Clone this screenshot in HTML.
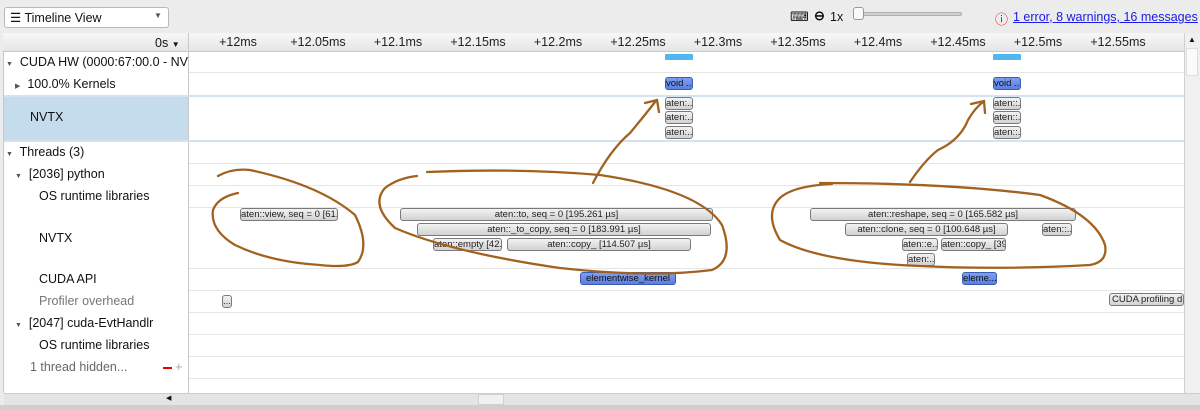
<!DOCTYPE html>
<html><head><meta charset="utf-8"><style>
*{box-sizing:border-box;margin:0;padding:0}
body{width:1200px;height:410px;overflow:hidden;background:#ececec;font-family:"Liberation Sans",sans-serif;font-size:12px;color:#111;position:relative}
.a{position:absolute}
.lbl{position:absolute;white-space:nowrap;font-size:12.5px}
.bar{position:absolute;height:13px;border:1px solid #7a7a7a;border-radius:3px;background:linear-gradient(#f2f2f2,#d2d2d2);font-size:9.5px;line-height:11px;text-align:center;overflow:hidden;white-space:nowrap;color:#222}
.blu{background:linear-gradient(#7d9ef0,#5b7fe0);border-color:#3b5bb0;color:#111}
.hl{position:absolute;left:189px;width:995px;height:1px;background:#e6e6e6}
.tl{position:absolute;top:35px;font-size:12.5px;color:#222;transform:translateX(-50%)}
</style></head><body>
<div class="a" style="left:4px;top:7px;width:165px;height:21px;background:#fff;border:1px solid #b8b8b8;border-radius:3px"></div>
<div class="lbl" style="left:10px;top:10px">☰ Timeline View</div>
<div class="lbl" style="left:154px;top:11px;font-size:8px;color:#555">▼</div>
<div class="lbl" style="left:790px;top:9px;font-size:13px">⌨</div>
<div class="lbl" style="left:814px;top:8px;font-size:13px;font-weight:bold">⊖</div>
<div class="lbl" style="left:830px;top:10px">1x</div>
<div class="a" style="left:855px;top:12px;width:107px;height:4px;background:#d0d0d0;border:1px solid #b0b0b0;border-radius:2px"></div>
<div class="a" style="left:853px;top:7px;width:11px;height:13px;background:#fafafa;border:1px solid #999;border-radius:3px"></div>
<div class="lbl" style="left:995px;top:9px;color:#e00;font-size:13px">ⓘ</div>
<div class="lbl" style="left:1013px;top:10px;color:#1a1ae6;text-decoration:underline">1 error, 8 warnings, 16 messages</div>
<div class="a" style="left:3px;top:33px;width:186px;height:360px;background:#fff;border-left:1px solid #c8c8c8;border-right:1px solid #c8c8c8"></div>
<div class="a" style="left:189px;top:52px;width:995px;height:341px;background:#fff"></div>
<div class="a" style="left:3px;top:33px;width:1181px;height:19px;background:linear-gradient(#f7f7f7,#e6e6e6);border-bottom:1px solid #c8c8c8"></div>
<div class="a" style="left:188px;top:33px;width:1px;height:360px;background:#c8c8c8"></div>
<div class="lbl" style="left:155px;top:36px">0s <span style="font-size:8px">▼</span></div>
<div class="tl" style="left:238px">+12ms</div><div class="tl" style="left:318px">+12.05ms</div><div class="tl" style="left:398px">+12.1ms</div><div class="tl" style="left:478px">+12.15ms</div><div class="tl" style="left:558px">+12.2ms</div><div class="tl" style="left:638px">+12.25ms</div><div class="tl" style="left:718px">+12.3ms</div><div class="tl" style="left:798px">+12.35ms</div><div class="tl" style="left:878px">+12.4ms</div><div class="tl" style="left:958px">+12.45ms</div><div class="tl" style="left:1038px">+12.5ms</div><div class="tl" style="left:1118px">+12.55ms</div>
<div class="a" style="left:4px;top:96px;width:184px;height:44px;background:#c5dcec"></div>
<div class="a" style="left:4px;top:95px;width:1180px;height:2px;background:#d6e3ee"></div>
<div class="a" style="left:4px;top:140px;width:1180px;height:2px;background:#d6e3ee"></div>
<div class="hl" style="top:72px"></div><div class="hl" style="top:163px"></div><div class="hl" style="top:185px"></div><div class="hl" style="top:207px"></div><div class="hl" style="top:268px"></div><div class="hl" style="top:290px"></div><div class="hl" style="top:312px"></div><div class="hl" style="top:334px"></div><div class="hl" style="top:356px"></div><div class="hl" style="top:378px"></div>
<div class="lbl" style="left:6px;top:55px"><span style="font-size:7px;color:#555">▼</span>&nbsp; CUDA HW (0000:67:00.0 - NV</div>
<div class="lbl" style="left:15px;top:77px"><span style="font-size:7px;color:#555">▶</span>&nbsp; 100.0% Kernels</div>
<div class="lbl" style="left:30px;top:110px">NVTX</div>
<div class="lbl" style="left:6px;top:145px"><span style="font-size:7px;color:#555">▼</span>&nbsp; Threads (3)</div>
<div class="lbl" style="left:15px;top:167px"><span style="font-size:7px;color:#555">▼</span>&nbsp; [2036] python</div>
<div class="lbl" style="left:39px;top:189px">OS runtime libraries</div>
<div class="lbl" style="left:39px;top:231px">NVTX</div>
<div class="lbl" style="left:39px;top:272px">CUDA API</div>
<div class="lbl" style="left:39px;top:294px;color:#777">Profiler overhead</div>
<div class="lbl" style="left:15px;top:316px"><span style="font-size:7px;color:#555">▼</span>&nbsp; [2047] cuda-EvtHandlr</div>
<div class="lbl" style="left:39px;top:338px">OS runtime libraries</div>
<div class="lbl" style="left:30px;top:360px;color:#666">1 thread hidden...</div>
<div class="a" style="left:163px;top:367px;width:9px;height:2px;background:#e00"></div>
<div class="lbl" style="left:175px;top:359px;color:#aaa;font-size:13px">+</div>
<div class="a" style="left:665px;top:54px;width:28px;height:6px;background:#4fb6f0;border-radius:1px"></div>
<div class="a" style="left:993px;top:54px;width:28px;height:6px;background:#4fb6f0;border-radius:1px"></div>
<div class="bar blu" style="left:665px;top:77px;width:28px">void ...</div>
<div class="bar blu" style="left:993px;top:77px;width:28px">void ...</div>
<div class="bar" style="left:665px;top:97px;width:28px">aten:...</div>
<div class="bar" style="left:665px;top:111px;width:28px">aten:...</div>
<div class="bar" style="left:665px;top:126px;width:28px">aten:...</div>
<div class="bar" style="left:993px;top:97px;width:28px">aten::...</div>
<div class="bar" style="left:993px;top:111px;width:28px">aten::...</div>
<div class="bar" style="left:993px;top:126px;width:28px">aten::...</div>
<div class="bar" style="left:240px;top:208px;width:98px">aten::view, seq = 0 [61.8...</div>
<div class="bar" style="left:400px;top:208px;width:313px">aten::to, seq = 0 [195.261 µs]</div>
<div class="bar" style="left:417px;top:223px;width:294px">aten::_to_copy, seq = 0 [183.991 µs]</div>
<div class="bar" style="left:433px;top:238px;width:69px">aten::empty [42....</div>
<div class="bar" style="left:507px;top:238px;width:184px">aten::copy_ [114.507 µs]</div>
<div class="bar blu" style="left:580px;top:272px;width:96px">elementwise_kernel</div>
<div class="bar" style="left:222px;top:295px;width:10px">...</div>
<div class="bar" style="left:810px;top:208px;width:266px">aten::reshape, seq = 0 [165.582 µs]</div>
<div class="bar" style="left:845px;top:223px;width:163px">aten::clone, seq = 0 [100.648 µs]</div>
<div class="bar" style="left:1042px;top:223px;width:30px">aten::...</div>
<div class="bar" style="left:902px;top:238px;width:36px">aten::e...</div>
<div class="bar" style="left:941px;top:238px;width:65px">aten::copy_ [39...</div>
<div class="bar" style="left:907px;top:253px;width:28px">aten:...</div>
<div class="bar blu" style="left:962px;top:272px;width:35px">eleme...</div>
<div class="bar" style="left:1109px;top:293px;width:75px;text-align:left;padding-left:2px">CUDA profiling d...</div>
<svg class="a" style="left:0;top:0" width="1200" height="410" fill="none" stroke="#a2621f" stroke-width="2.3" stroke-linecap="round">
<path d="M218 176 Q232 168 250 170 Q320 185 355 215 Q370 245 358 262 Q348 268 320 265 Q270 262 235 245 Q210 230 213 210 Q218 197 238 193"/>
<path d="M427 172 Q520 168 600 175 Q700 190 722 225 Q735 260 712 270 Q650 278 560 268 Q450 252 395 228 Q370 205 385 188 Q398 178 417 176"/>
<path d="M593 183 Q610 150 630 133 Q645 115 655 102 M645 103 L657 100 L659 112"/>
<path d="M820 183 Q950 183 1040 195 Q1095 215 1105 245 Q1108 262 1090 265 Q1000 270 920 266 Q820 262 780 240 Q765 215 778 200 Q790 186 832 184"/>
<path d="M910 182 Q925 160 938 150 Q960 140 968 120 Q975 108 983 102 M971 104 L984 101 L985 113"/>
</svg>
<div class="a" style="left:1184px;top:33px;width:16px;height:360px;background:#f0f0f0;border-left:1px solid #d0d0d0"></div>
<div class="lbl" style="left:1188px;top:35px;font-size:8px">▲</div>
<div class="a" style="left:1186px;top:48px;width:12px;height:28px;background:#fafafa;border:1px solid #ddd"></div>
<div class="a" style="left:4px;top:393px;width:1196px;height:12px;background:#e4e4e4;border-top:1px solid #ccc"></div>
<div class="lbl" style="left:166px;top:394px;font-size:7px">◀</div>
<div class="a" style="left:478px;top:394px;width:26px;height:11px;background:#f0f0f0;border:1px solid #d0d0d0"></div>
<div class="a" style="left:0;top:405px;width:1200px;height:5px;background:#cfcfcf"></div>
</body></html>
